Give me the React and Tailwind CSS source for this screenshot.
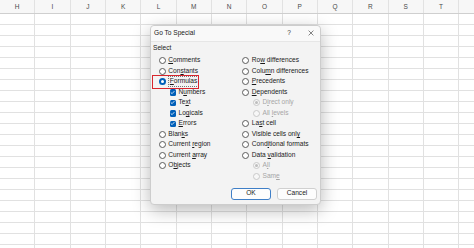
import React from "react";

const COLS = ["H", "I", "J", "K", "L", "M", "N", "O", "P", "Q", "R", "S", "T", ""];
const ROWS = Array.from({ length: 22 }, (_, i) => i);

function Mn({ t, u }) {
  if (u < 0) return <span>{t}</span>;
  return (
    <span>
      {t.slice(0, u)}
      <span className="underline underline-offset-[1px] decoration-[0.5px]">{t[u]}</span>
      {t.slice(u + 1)}
    </span>
  );
}

function Radio({ checked, disabled, dot }) {
  if (checked) {
    return (
      <span className="w-[7px] h-[7px] rounded-full bg-[#005fb8] flex items-center justify-center shrink-0">
        <span className="w-[3px] h-[3px] rounded-full bg-white" />
      </span>
    );
  }
  return (
    <span
      className={
        disabled
          ? "w-[7px] h-[7px] rounded-full border-[0.8px] border-[#c9c9c9] bg-[#f7f7f7] flex items-center justify-center shrink-0"
          : "w-[7px] h-[7px] rounded-full border-[0.8px] border-[#5c5c5c] bg-white flex items-center justify-center shrink-0"
      }
    >
      {dot && <span className="w-[3px] h-[3px] rounded-full bg-[#bdbdbd]" />}
    </span>
  );
}

function Check() {
  return (
    <span className="w-[6.5px] h-[6.5px] rounded-[1.5px] bg-[#005fb8] flex items-center justify-center shrink-0">
      <svg width="5" height="5" viewBox="0 0 10 10">
        <path d="M2 5.2 L4.2 7.3 L8.2 2.8" fill="none" stroke="white" strokeWidth="1.5" strokeLinecap="round" strokeLinejoin="round" />
      </svg>
    </span>
  );
}

function Row({ kind, t, u, indent, checked, disabled, dot, focus }) {
  return (
    <div className={indent ? "flex items-center h-[10.5px] gap-[2.5px] pl-[11px]" : "flex items-center h-[10.5px] gap-[2.8px]"}>
      {kind === "check" ? <Check /> : <Radio checked={checked} disabled={disabled} dot={dot} />}
      <span
        className={
          focus
            ? "leading-none text-[#1a1a1a] border-[0.5px] border-dotted border-[#777] px-[0.5px] py-[1px]"
            : disabled
            ? "leading-none text-[#a6a6a6]"
            : "leading-none text-[#1a1a1a]"
        }
      >
        <Mn t={t} u={u} />
      </span>
    </div>
  );
}

const LEFT = [
  { t: "Comments", u: 0 },
  { t: "Constants", u: 3 },
  { t: "Formulas", u: 0, checked: true, focus: true },
  { t: "Numbers", u: 1, kind: "check", indent: true },
  { t: "Text", u: 2, kind: "check", indent: true },
  { t: "Logicals", u: 2, kind: "check", indent: true },
  { t: "Errors", u: 0, kind: "check", indent: true },
  { t: "Blanks", u: 4 },
  { t: "Current region", u: 8 },
  { t: "Current array", u: 8 },
  { t: "Objects", u: 1 },
];

const RIGHT = [
  { t: "Row differences", u: 2 },
  { t: "Column differences", u: 4 },
  { t: "Precedents", u: 0 },
  { t: "Dependents", u: 0 },
  { t: "Direct only", u: 1, indent: true, disabled: true, dot: true },
  { t: "All levels", u: 4, indent: true, disabled: true },
  { t: "Last cell", u: 2 },
  { t: "Visible cells only", u: 17 },
  { t: "Conditional formats", u: 4 },
  { t: "Data validation", u: 5 },
  { t: "All", u: 1, indent: true, disabled: true, dot: true },
  { t: "Same", u: 3, indent: true, disabled: true },
];

export default function App() {
  return (
    <div className="relative w-[474px] h-[248px] overflow-hidden bg-white font-['Liberation_Sans',Arial,sans-serif]">
      {/* column header */}
      <div className="flex h-[14px] bg-[#f7f7f7] border-b border-[#cfcfcf]">
        {COLS.map((c, i) => (
          <div
            key={i}
            className="w-[35.33px] shrink-0 h-full border-r border-[#e2e2e2] flex items-center justify-center text-[6.5px] text-[#4a4a4a]"
          >
            {c}
          </div>
        ))}
      </div>
      {/* grid rows */}
      {ROWS.map((r) => (
        <div key={r} className="flex h-[11px] border-b border-[#e1e1e1]">
          {COLS.map((c, i) => (
            <div key={i} className="w-[35.33px] shrink-0 h-full border-r border-[#e1e1e1]" />
          ))}
        </div>
      ))}

      {/* dialog */}
      <div className="absolute left-[150px] top-[25px] w-[171px] h-[180px] flex flex-col rounded-[4px] border border-[#cdcdcd] bg-[#f3f3f3] shadow-[0_5px_18px_rgba(0,0,0,0.28)] text-[6.6px]">
        <div className="h-[15.5px] flex items-center pl-[3px] bg-[#f9f9f9] rounded-t-[4px] border-b border-[#e6e6e6] relative">
          <span className="text-[#1a1a1a] leading-none">Go To Special</span>
          <span className="ml-auto text-[#333] leading-none w-[10px] text-center">?</span>
          <span className="ml-[14px] mr-[6px] flex items-center">
            <svg width="6" height="6" viewBox="0 0 10 10">
              <path d="M1 1 L9 9 M9 1 L1 9" stroke="#333" strokeWidth="1" fill="none" />
            </svg>
          </span>
        </div>
        <div className="flex-1 flex flex-col pl-[2px] pt-[2px] relative">
          <div className="h-[10.5px] flex items-center text-[#1a1a1a] leading-none">Select</div>
          <div className="flex pl-[5.5px] mt-[1.5px]">
            <div className="w-[83.5px] flex flex-col">
              {LEFT.map((it) => (
                <Row key={it.t} {...it} />
              ))}
            </div>
            <div className="flex flex-col">
              {RIGHT.map((it) => (
                <Row key={it.t + "r"} {...it} />
              ))}
            </div>
          </div>
          <div className="mt-auto flex justify-end gap-[6px] pr-[3px] pb-[4px]">
            <div className="w-[40px] h-[12.5px] rounded-[3px] border border-[#3f7fc7] bg-[#fdfdfd] flex items-center justify-center text-[#1a1a1a] leading-none">
              OK
            </div>
            <div className="w-[40px] h-[12.5px] rounded-[3px] border border-[#d0d0d0] bg-[#fdfdfd] flex items-center justify-center text-[#1a1a1a] leading-none">
              Cancel
            </div>
          </div>
        </div>
        {/* red annotation box */}
        <div className="absolute left-[0.5px] top-[48.5px] w-[47.5px] h-[14px] border-[1.5px] border-[#d8262d]" />
      </div>
    </div>
  );
}
